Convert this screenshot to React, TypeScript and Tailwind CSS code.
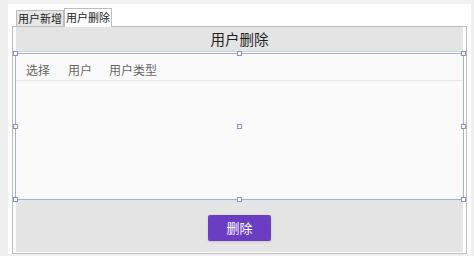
import React from 'react';

const font = { fontFamily: '"Noto Sans CJK SC", "Noto Sans", sans-serif' };

function Handle({ className }: { className: string }) {
    return <div className={`absolute w-[5px] h-[5px] border border-[#7f93c9] bg-white ${className}`} />;
}

export default function App() {
    return (
        <div className="w-[474px] h-[256px] bg-[#f0f0f0] pt-[4px] pl-[8px] pr-[3px] overflow-hidden" style={font}>
            <div className="h-[250px] bg-white px-[4px] pt-[4px] flex flex-col">
                {/* Tabs */}
                <div className="flex items-end h-[18px] pl-[4px] relative z-10">
                    <div className="h-[16px] px-[1px] border border-b-0 border-[#bdbdbd] bg-[#e6e6e6] text-[11px] leading-[15px] text-[#222]">
                        用户新增
                    </div>
                    <div className="h-[19px] px-[1px] border border-b-0 border-[#bdbdbd] bg-white text-[11px] leading-[17px] text-[#222] mb-[-1px]">
                        用户删除
                    </div>
                </div>

                {/* Tab pane */}
                <div className="h-[228px] border border-[#bdbdbd] px-[2px] pb-[1px] flex flex-col">
                    <div className="h-[25px] bg-[#e4e4e4] border-b border-[#cfd2dc] flex items-center justify-center text-[14.5px] text-[#1e1e1e] mx-[1px]">
                        用户删除
                    </div>
                    <div className="h-[1px]" />

                    {/* Table (selected) */}
                    <div className="relative h-[147px] border border-[#9fb2de] bg-[#fafafa]">
                        <div className="h-[27px] border-b border-[#e6e6e6] flex items-start pt-[8px] text-[12px] leading-[16px] text-[#666]">
                            <span className="ml-[10px]">选择</span>
                            <span className="ml-[18px]">用户</span>
                            <span className="ml-[17px]">用户类型</span>
                        </div>
                        <Handle className="-left-[3px] -top-[3px]" />
                        <Handle className="left-[221px] -top-[3px]" />
                        <Handle className="-right-[3px] -top-[3px]" />
                        <Handle className="-left-[3px] top-[70px]" />
                        <Handle className="left-[221px] top-[70px]" />
                        <Handle className="-right-[3px] top-[70px]" />
                        <Handle className="-left-[3px] -bottom-[3px]" />
                        <Handle className="left-[221px] -bottom-[3px]" />
                        <Handle className="-right-[3px] -bottom-[3px]" />
                    </div>

                    {/* Bottom area */}
                    <div className="flex-1 bg-[#e4e4e4] flex items-start justify-center pt-[15px] mx-[1px]">
                        <button className="w-[63px] h-[26px] rounded-[2px] bg-[#6a3dc3] text-white text-[13px] shadow-sm">
                            删除
                        </button>
                    </div>
                </div>
            </div>
        </div>
    );
}
